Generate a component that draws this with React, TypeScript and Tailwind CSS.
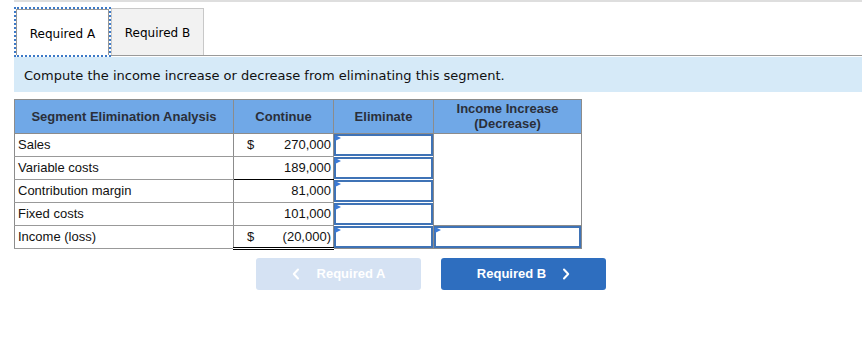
import React from 'react';

const rows = [
  { label: 'Sales', dollar: true, value: '270,000', line: 'gray' },
  { label: 'Variable costs', dollar: false, value: '189,000', line: 'black' },
  { label: 'Contribution margin', dollar: false, value: '81,000', line: 'gray' },
  { label: 'Fixed costs', dollar: false, value: '101,000', line: 'gray' },
  { label: 'Income (loss)', dollar: true, value: '(20,000)', line: 'double' },
];

const lineClass: Record<string, string> = {
  gray: 'border-b border-b-[#999]',
  black: 'border-b border-b-black',
  double: 'border-b-[3px] border-double border-b-black',
};

const InputBox = () => (
  <div className="relative h-[22px] border-2 border-[#3f73b6] bg-white">
    <svg className="absolute left-[-1px] top-[-1px]" width="6" height="6" viewBox="0 0 6 6">
      <polygon points="0,0 6,3 0,6" fill="#3b7ad6" />
    </svg>
  </div>
);

const Chevron = ({ dir }: { dir: 'left' | 'right' }) => (
  <svg width="8" height="12" viewBox="0 0 8 12" fill="none" stroke="currentColor" strokeWidth="2" strokeLinecap="round" strokeLinejoin="round">
    {dir === 'left' ? <polyline points="6,1.5 1.8,6 6,10.5" /> : <polyline points="2,1.5 6.2,6 2,10.5" />}
  </svg>
);

export default function App() {
  return (
    <div className="w-[862px] h-[339px] bg-white overflow-hidden">
      <div className="ml-[14px] h-[2px] bg-[#dedede]" />

      {/* tabs */}
      <div className="ml-[14px] mt-[5px] flex items-end font-['DejaVu_Sans',Verdana,sans-serif] text-[12px] text-black">
        <div className="w-[97px] h-[50px] border-2 border-dotted border-[#3c79c7] bg-white">
          <div className="h-full border border-b-0 border-[#999] flex items-center justify-center pt-[3px]">
            Required A
          </div>
        </div>
        <div className="flex-1 flex items-end border-b border-[#9a9a9a] mb-px">
          <div className="w-[93px] h-[47px] border border-b-0 border-[#c8c8c8] bg-[#f2f2f2] flex items-center justify-center pt-[2px]">
            Required B
          </div>
        </div>
      </div>

      <div className="ml-[14px] h-[35px] bg-[#d6eaf8] flex items-center pl-[10px] pt-[3px] font-['DejaVu_Sans',Verdana,sans-serif] text-[13px] text-[#111]">
        Compute the income increase or decrease from eliminating this segment.
      </div>

      <table className="ml-[14px] mt-[7px] w-[567px] table-fixed border-collapse border border-[#8c8c8c] font-['Liberation_Sans',Arial,sans-serif]">
        <colgroup>
          <col className="w-[219px]" />
          <col className="w-[100px]" />
          <col className="w-[100px]" />
          <col className="w-[148px]" />
        </colgroup>
        <thead>
          <tr className="h-[34px] bg-[#70a8e7] text-[13px] font-bold text-[#2a2f3a] leading-[15px]">
            <th className="border-r border-[#8c8c8c] border-b border-b-[#8c8c8c] font-bold">Segment Elimination Analysis</th>
            <th className="border-r border-[#8c8c8c] border-b border-b-[#8c8c8c] font-bold">Continue</th>
            <th className="border-r border-[#8c8c8c] border-b border-b-[#8c8c8c] font-bold">Eliminate</th>
            <th className="border-b border-b-[#8c8c8c] font-bold pb-[2px]">
              Income Increase
              <br />
              (Decrease)
            </th>
          </tr>
        </thead>
        <tbody className="text-[13px] text-[#111] leading-[16px]">
          {rows.map((row, i) => (
            <tr key={row.label} className="h-[23px]">
              <td className="border-b border-[#999] border-r border-r-[#8c8c8c] pl-[3px] p-0 align-middle">{row.label}</td>
              <td className={`p-0 border-r border-r-[#8c8c8c] ${lineClass[row.line]}`}>
                <div className="flex justify-between pl-[13px] pr-[2px]">
                  <span>{row.dollar ? '$' : ''}</span>
                  <span>{row.value}</span>
                </div>
              </td>
              <td className="p-0 border-r border-r-[#8c8c8c]">
                <InputBox />
              </td>
              {i === 0 && <td rowSpan={4} className="p-0 border-b border-b-[#8c8c8c] bg-white" />}
              {i === 4 && (
                <td className="p-0">
                  <InputBox />
                </td>
              )}
            </tr>
          ))}
        </tbody>
      </table>

      <div className="mt-[8px] flex justify-center gap-[20px] font-['Liberation_Sans',Arial,sans-serif] text-[13px] font-bold text-white">
        <div className="w-[165px] h-[32px] rounded-[3px] bg-[#d5e2f3] flex items-center justify-center gap-[17px]">
          <Chevron dir="left" />
          <span>Required A</span>
        </div>
        <div className="w-[165px] h-[32px] rounded-[3px] bg-[#2e6ebf] flex items-center justify-center gap-[16px]">
          <span>Required B</span>
          <Chevron dir="right" />
        </div>
      </div>
    </div>
  );
}
